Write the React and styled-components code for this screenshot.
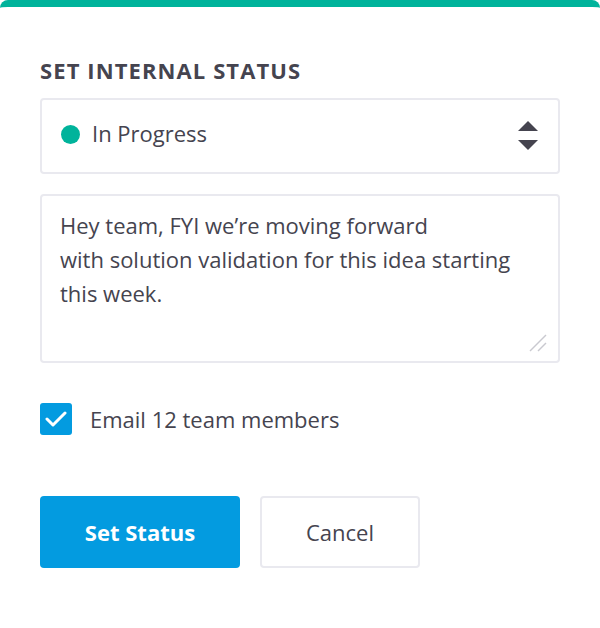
import React from "react";
import styled, { createGlobalStyle } from "styled-components";

const Global = createGlobalStyle`
  html, body { margin: 0; padding: 0; background: #fff; }
  body { font-family: "Open Sans", "Lato", sans-serif; color: #45444f; }
  * { box-sizing: border-box; }
`;

const Card = styled.div`
  width: 600px;
  height: 628px;
  background: #fff;
  border-top: 7px solid #00b39b;
  border-radius: 8px 8px 0 0;
  padding: 52px 40px 0 40px;
  display: flex;
  flex-direction: column;
`;

const Label = styled.div`
  font-size: 22px;
  font-weight: 700;
  letter-spacing: 1.1px;
  text-transform: uppercase;
  line-height: 22px;
  color: #45444f;
  margin-bottom: 17px;
`;

const Select = styled.div`
  height: 76px;
  border: 2px solid #e9e9ef;
  border-radius: 4px;
  display: flex;
  align-items: center;
  padding: 0 20px 0 19px;
  margin-bottom: 20px;
`;

const Dot = styled.span`
  width: 19px;
  height: 19px;
  border-radius: 50%;
  background: ${(p) => p.color};
  margin-right: 12px;
  margin-top: -3px;
  flex: none;
`;

const SelectText = styled.span`
  flex: 1;
  font-size: 22px;
  line-height: 30px;
  margin-top: -6px;
  color: #45444f;
`;

const TextArea = styled.div`
  position: relative;
  height: 169px;
  border: 2px solid #e9e9ef;
  border-radius: 4px;
  padding: 12px 18px;
  font-size: 22px;
  line-height: 34px;
  color: #45444f;
  margin-bottom: 40px;
`;

const Grip = styled.svg`
  position: absolute;
  right: 10px;
  bottom: 8px;
`;

const CheckRow = styled.label`
  display: flex;
  align-items: center;
  gap: 18px;
  font-size: 22px;
  line-height: 30px;
  color: #45444f;
  margin-bottom: 61px;
`;

const Box = styled.span`
  width: 32px;
  height: 32px;
  border-radius: 3px;
  background: #039be0;
  display: flex;
  align-items: center;
  justify-content: center;
`;

const Buttons = styled.div`
  display: flex;
  gap: 20px;
`;

const Button = styled.button`
  height: 72px;
  width: ${(p) => p.w}px;
  border-radius: 4px;
  font-family: inherit;
  font-size: 22px;
  cursor: pointer;
  ${(p) =>
    p.primary
      ? `background: #039be0; color: #fff; border: none; font-weight: 700;`
      : `background: #fff; color: #45444f; border: 2px solid #e9e9ef; font-weight: 400;`}
`;

export default function App() {
  return (
    <>
      <Global />
      <Card>
        <Label>Set Internal Status</Label>
        <Select>
          <Dot color="#00b39b" />
          <SelectText>In Progress</SelectText>
          <svg width="20" height="30" viewBox="0 0 20 30">
            <polygon points="10,0 20,10 0,10" fill="#45444f" />
            <polygon points="0,19 20,19 10,29" fill="#45444f" />
          </svg>
        </Select>
        <TextArea>
          Hey team, FYI we’re moving forward
          <br />
          with solution validation for this idea starting
          <br />
          this week.
          <Grip width="20" height="20" viewBox="0 0 20 20">
            <line x1="2" y1="18" x2="18" y2="2" stroke="#c9c9d0" strokeWidth="1.4" />
            <line x1="10" y1="18" x2="18" y2="10" stroke="#c9c9d0" strokeWidth="1.4" />
          </Grip>
        </TextArea>
        <CheckRow>
          <Box>
            <svg width="22" height="18" viewBox="0 0 22 18">
              <polyline points="2,9 8,15 20,3" fill="none" stroke="#fff" strokeWidth="3" strokeLinecap="round" strokeLinejoin="round" />
            </svg>
          </Box>
          Email 12 team members
        </CheckRow>
        <Buttons>
          <Button primary w={200}>Set Status</Button>
          <Button w={160}>Cancel</Button>
        </Buttons>
      </Card>
    </>
  );
}
